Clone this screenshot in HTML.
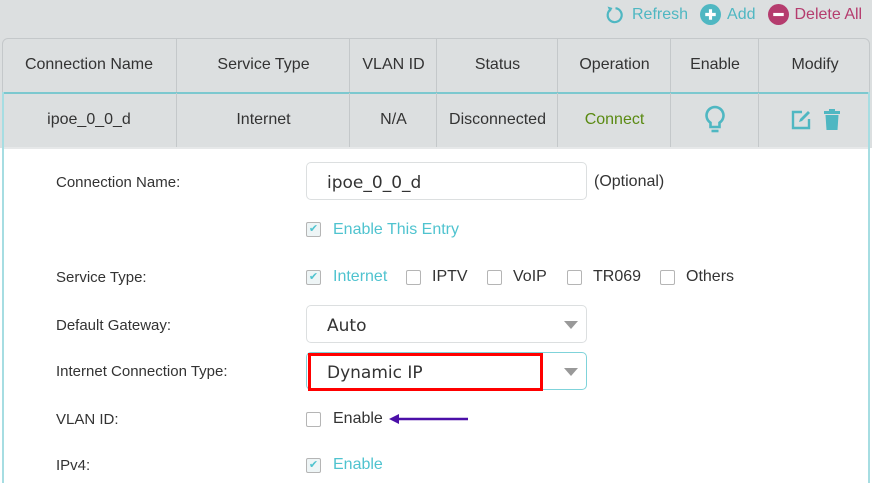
<!DOCTYPE html>
<html><head><style>
body{margin:0;width:872px;height:483px;overflow:hidden;background:#fff;font-family:"Liberation Sans",sans-serif;position:relative}
.a{position:absolute}
.top{left:0;top:0;width:872px;height:148px;background:#dcdfe0}
.hdr{top:38px;height:54px;font-size:16px;color:#333;display:flex;align-items:center;justify-content:center;border-left:1px solid #c4c8ca}
.row{top:93px;height:54px;font-size:16px;color:#333;display:flex;align-items:center;justify-content:center;border-left:1px solid #c4c8ca}
.lbl{left:56px;font-size:15px;color:#333}
.cb{width:13px;height:13px;border:1px solid #b5b5b5;border-radius:2px;background:#fff}
.cbc{color:#4fc3cf;font-size:11px;line-height:13px;text-align:center;background:#eef5f6}
.t{font-size:16px;color:#333}
.tc{font-size:16px;color:#4fc3cf}
.inp{left:306px;width:281px;height:38px;border:1px solid #dcdfe0;border-radius:5px;box-sizing:border-box;font-family:"DejaVu Sans",sans-serif;font-size:17px;color:#333;padding-left:20px;line-height:40px}
.arr{position:absolute;right:8px;top:15px;width:0;height:0;border-left:7px solid transparent;border-right:7px solid transparent;border-top:8px solid #999}
</style></head><body>
<div class="a top"></div>
<div class="a" style="left:2px;top:38px;width:868px;height:110px;border:1px solid #c4c8ca;border-radius:6px 6px 0 0;box-sizing:border-box"></div>
<div class="a" style="left:2px;top:92px;width:868px;height:2px;background:#7cc8cf"></div>
<div class="a" style="left:2px;top:92px;width:2px;height:391px;background:#a6dde2"></div>
<div class="a" style="left:868px;top:92px;width:2px;height:391px;background:#a6dde2"></div>
<div class="a" style="left:4px;top:147px;width:864px;height:2px;background:#e6e8e9"></div>

<div class="a" style="left:604px;top:4px;font-size:16px;color:#4fb7c2;display:flex;align-items:center">
<svg width="20" height="20" viewBox="0 0 20 20"><path d="M7 4.2A7 7 0 1 0 11.5 3.2" fill="none" stroke="#4fb7c2" stroke-width="2.2"/><path d="M3.5 1.5l5 1.5-2.5 4z" fill="#4fb7c2"/></svg>
<span style="margin-left:8px">Refresh</span>
<svg style="margin-left:12px" width="21" height="21" viewBox="0 0 20 20"><circle cx="10" cy="10" r="10" fill="#4fb7c2"/><path d="M10 5v10M5 10h10" stroke="#fff" stroke-width="3"/></svg>
<span style="margin-left:6px">Add</span>
<svg style="margin-left:12px" width="21" height="21" viewBox="0 0 20 20"><circle cx="10" cy="10" r="10" fill="#b53c6e"/><path d="M5 10h10" stroke="#fff" stroke-width="3"/></svg>
<span style="margin-left:6px;color:#b53c6e">Delete All</span></div>

<div class="a hdr" style="left:2px;width:174px;border:none">Connection Name</div>
<div class="a hdr" style="left:176px;width:173px">Service Type</div>
<div class="a hdr" style="left:349px;width:87px">VLAN ID</div>
<div class="a hdr" style="left:436px;width:121px">Status</div>
<div class="a hdr" style="left:557px;width:113px">Operation</div>
<div class="a hdr" style="left:670px;width:88px">Enable</div>
<div class="a hdr" style="left:758px;width:112px">Modify</div>

<div class="a row" style="left:2px;width:174px;border:none">ipoe_0_0_d</div>
<div class="a row" style="left:176px;width:173px">Internet</div>
<div class="a row" style="left:349px;width:87px">N/A</div>
<div class="a row" style="left:436px;width:121px">Disconnected</div>
<div class="a row" style="left:557px;width:113px;color:#5a8a12">Connect</div>
<div class="a row" style="left:670px;width:88px"><svg width="22" height="30" viewBox="0 0 22 30"><path d="M11 2a8.5 8.5 0 0 0-4.5 15.7V22h9v-4.3A8.5 8.5 0 0 0 11 2z" fill="none" stroke="#4fb7c2" stroke-width="2.6"/><path d="M7.5 26h7" stroke="#4fb7c2" stroke-width="2.6"/></svg></div>
<div class="a row" style="left:758px;width:112px"><svg width="22" height="22" viewBox="0 0 22 22"><path d="M12 3H3v16h16v-9" fill="none" stroke="#4fb7c2" stroke-width="2.4"/><path d="M9 13l1-3 8-8 2 2-8 8z" fill="#4fb7c2"/></svg><svg style="margin-left:12px" width="16" height="22" viewBox="0 0 16 22"><rect x="0" y="2" width="16" height="3" fill="#4fb7c2"/><rect x="5" y="0" width="6" height="3" fill="#4fb7c2"/><path d="M1.5 6h13l-1 15h-11z" fill="#4fb7c2"/></svg></div>

<div class="a lbl" style="top:174px">Connection Name:</div>
<div class="a inp" style="top:162px">ipoe_0_0_d</div>
<div class="a t" style="left:594px;top:173px">(Optional)</div>

<div class="a cb cbc" style="left:306px;top:222px">✔</div><div class="a tc" style="left:333px;top:221px">Enable This Entry</div>

<div class="a lbl" style="top:269px">Service Type:</div>
<div class="a cb cbc" style="left:306px;top:270px">✔</div><div class="a tc" style="left:333px;top:268px">Internet</div>
<div class="a cb" style="left:406px;top:270px"></div><div class="a t" style="left:432px;top:268px">IPTV</div>
<div class="a cb" style="left:487px;top:270px"></div><div class="a t" style="left:513px;top:268px">VoIP</div>
<div class="a cb" style="left:567px;top:270px"></div><div class="a t" style="left:593px;top:268px">TR069</div>
<div class="a cb" style="left:660px;top:270px"></div><div class="a t" style="left:686px;top:268px">Others</div>

<div class="a lbl" style="top:317px">Default Gateway:</div>
<div class="a inp" style="top:305px">Auto<div class="arr"></div></div>

<div class="a lbl" style="top:363px">Internet Connection Type:</div>
<div class="a inp" style="top:352px;border-color:#7fd3da">Dynamic IP<div class="arr"></div></div>
<div class="a" style="left:308px;top:353px;width:235px;height:38px;border:3px solid #f00;box-sizing:border-box"></div>

<div class="a lbl" style="top:411px">VLAN ID:</div>
<div class="a cb" style="left:306px;top:412px"></div><div class="a t" style="left:333px;top:410px">Enable</div>
<svg class="a" style="left:388px;top:412px" width="80" height="14"><path d="M8 7h78" stroke="#4b0fa8" stroke-width="2.5"/><path d="M1 7l10-5v10z" fill="#4b0fa8"/></svg>

<div class="a lbl" style="top:457px">IPv4:</div>
<div class="a cb cbc" style="left:306px;top:458px">✔</div><div class="a tc" style="left:333px;top:456px">Enable</div>
</body></html>
